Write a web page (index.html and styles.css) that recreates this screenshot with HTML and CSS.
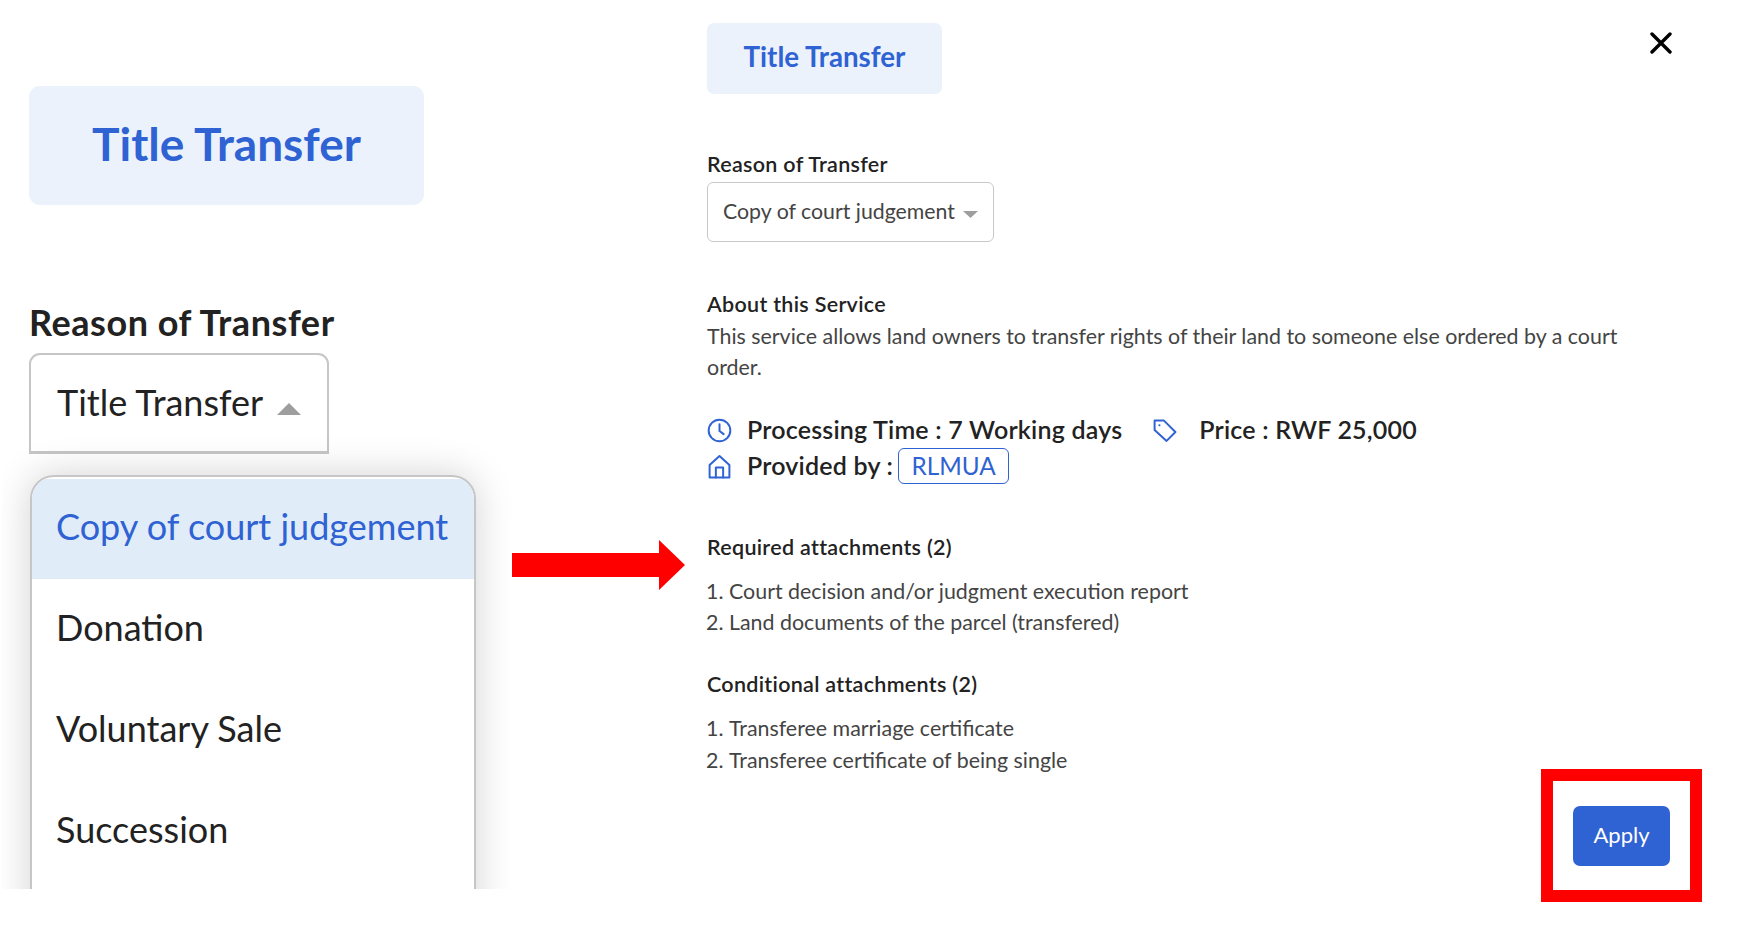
FILE: index.html
```html
<!DOCTYPE html>
<html lang="en">
<head>
<meta charset="utf-8">
<title>Title Transfer</title>
<link rel="stylesheet" href="styles.css">
</head>
<body>
<main class="page">
  <section class="zoomed">
    <div class="zoomed-chip">Title Transfer</div>
    <div class="zoomed-label">Reason of Transfer</div>
    <div class="zoomed-select">
      <span>Title Transfer</span>
      <svg class="zoomed-caret" viewBox="0 0 24 12"><path d="M12 0 24 12H0Z"/></svg>
    </div>
    <ul class="menu">
      <li class="menu-item is-active">Copy of court judgement</li>
      <li class="menu-item">Donation</li>
      <li class="menu-item">Voluntary Sale</li>
      <li class="menu-item">Succession</li>
    </ul>
  </section>

  <svg class="arrow" viewBox="0 0 173 50"><path d="M0 13H147V0L173 25 147 50V37H0Z"/></svg>

  <section class="detail">
    <svg class="close" viewBox="0 0 22 22"><path d="M2 2 20 20M20 2 2 20"/></svg>
    <div class="chip">Title Transfer</div>
    <div class="heading heading-reason">Reason of Transfer</div>
    <div class="select">
      <span>Copy of court judgement</span>
      <svg class="caret" viewBox="0 0 15 7"><path d="M0 0H15L7.5 7Z"/></svg>
    </div>
    <div class="heading heading-about">About this Service</div>
    <p class="copy">This service allows land owners to transfer rights of their land to someone else ordered by a court order.</p>
    <div class="meta">
      <div class="meta-row">
        <svg class="icon" viewBox="0 0 24 24"><circle cx="12" cy="12" r="10.4"/><path d="M12 6V12.5L16 15.5"/></svg>
        <span class="meta-text">Processing Time : 7 Working days</span>
        <svg class="icon icon-tag" viewBox="0 0 24 24"><path d="M2.5 2.5H11.5L22.5 13.5 14 22 2.5 11.5Z"/><path d="M7 7H7.2"/></svg>
        <span class="meta-text">Price : RWF 25,000</span>
      </div>
      <div class="meta-row">
        <svg class="icon" viewBox="0 0 24 24"><path d="M2.5 10.5 12 2 21.5 10.5V22.5H2.5Z"/><path d="M8.5 22.5V13H15.5V22.5"/></svg>
        <span class="meta-text">Provided by :</span>
        <span class="provider">RLMUA</span>
      </div>
    </div>
    <div class="heading heading-required">Required attachments (2)</div>
    <ol class="attachments attachments-required">
      <li>Court decision and/or judgment execution report</li>
      <li>Land documents of the parcel (transfered)</li>
    </ol>
    <div class="heading heading-conditional">Conditional attachments (2)</div>
    <ol class="attachments attachments-conditional">
      <li>Transferee marriage certificate</li>
      <li>Transferee certificate of being single</li>
    </ol>
    <div class="apply-frame"><button class="apply" type="button">Apply</button></div>
  </section>
</main>
</body>
</html>
```
FILE: styles.css
```css
* { box-sizing: border-box; }
html, body { margin: 0; padding: 0; background: #fff; }
body {
  width: 1743px;
  height: 948px;
  overflow: hidden;
  font-family: "Lato", "Open Sans", sans-serif;
  color: #222;
}
.page { display: flex; align-items: flex-start; height: 948px; }

/* left: enlarged picture of the dropdown */
.zoomed {
  width: 509px;
  height: 889px;
  margin-left: 2px;
  padding: 86px 0 0 27px;
  overflow: hidden;
  flex: none;
}
.zoomed-chip {
  width: 395px;
  height: 119px;
  padding-bottom: 4px;
  display: flex;
  align-items: center;
  justify-content: center;
  background: #ecf2fb;
  border-radius: 11px;
  color: #2f62d3;
  font-size: 46px;
  font-weight: 700;
}
.zoomed-label {
  margin-top: 93px;
  height: 48px;
  line-height: 48px;
  font-size: 36px;
  font-weight: 700;
  letter-spacing: .55px;
  color: #222;
}
.zoomed-select {
  width: 300px;
  height: 101px;
  margin-top: 7px;
  padding: 24px 0 0 26px;
  border: 2px solid #c6c6c6;
  border-bottom-width: 3px;
  border-radius: 11px 11px 0 0;
  font-size: 36px;
  line-height: 46px;
  color: #222;
  display: flex;
  align-items: flex-start;
  gap: 14px;
}
.zoomed-caret { width: 24px; height: 12px; margin-top: 24px; fill: #9e9e9e; flex: none; }
.menu {
  list-style: none;
  width: 446px;
  margin: 21px 0 0 1px;
  padding: 2px 0 0;
  height: 500px;
  border: 2px solid #c6c6c6;
  border-radius: 24px;
  box-shadow: 0 0 38px rgba(0, 0, 0, .18);
  overflow: hidden;
  background: #fff;
}
.menu-item {
  height: 101px;
  padding: 0 0 6px 24px;
  display: flex;
  align-items: center;
  font-size: 36px;
  color: #222;
}
.menu-item.is-active { height: 100px; background: #e1ecf9; color: #2f62d3; }

.arrow { width: 173px; height: 50px; margin: 540px 0 0 1px; fill: #f00; flex: none; }

/* right: service detail */
.detail {
  position: relative;
  margin-left: 22px;
  padding-top: 23px;
  width: 1036px;
  flex: none;
  display: flex;
  flex-direction: column;
  align-items: flex-start;
}
.close {
  position: absolute;
  left: 943px;
  top: 32px;
  width: 22px;
  height: 22px;
  fill: none;
  stroke: #000;
  stroke-width: 3.4;
  stroke-linecap: round;
}
.chip {
  width: 235px;
  height: 71px;
  padding-bottom: 5px;
  display: flex;
  align-items: center;
  justify-content: center;
  background: #ecf2fb;
  border-radius: 7px;
  color: #2f62d3;
  font-size: 27.7px;
  font-weight: 700;
}
.heading {
  height: 31px;
  line-height: 29px;
  font-size: 21.5px;
  font-weight: 600;
  letter-spacing: .3px;
  color: #222;
}
.heading-reason { margin-top: 56px; }
.select {
  width: 287px;
  height: 60px;
  margin-top: 1px;
  padding: 0 15px 3px;
  border: 1px solid #c8c8c8;
  border-radius: 6px;
  display: flex;
  align-items: center;
  justify-content: space-between;
  font-size: 21.3px;
  color: #444;
}
.caret { width: 15px; height: 7px; margin-top: 7px; fill: #9e9e9e; flex: none; }
.heading-about { margin-top: 48px; }
.copy {
  margin: 0 0 1px;
  width: 930px;
  font-size: 21.4px;
  line-height: 31px;
  color: #444;
}
.meta { margin-top: 28px; }
.meta-row { display: flex; align-items: center; height: 36px; }
.icon {
  width: 25px;
  height: 25px;
  margin-right: 15px;
  fill: none;
  stroke: #2f62d3;
  stroke-width: 1.9;
  stroke-linecap: round;
  stroke-linejoin: round;
  flex: none;
}
.icon-tag { margin-left: 30px; margin-right: 22px; }
.meta-text { font-size: 25px; font-weight: 600; letter-spacing: .2px; color: #222; padding-bottom: 3px; }
.provider {
  width: 111px;
  height: 36px;
  margin-left: 5px;
  padding-bottom: 2px;
  display: flex;
  align-items: center;
  justify-content: center;
  border: 1px solid #2f62d3;
  border-radius: 6px;
  font-size: 24.3px;
  color: #2f62d3;
}
.heading-required { margin-top: 49px; }
.heading-conditional { margin-top: 31px; }
.attachments {
  margin: 0;
  padding: 0 0 0 22px;
  font-size: 21.4px;
  line-height: 31px;
  color: #444;
}
.attachments-required { margin-top: 12px; margin-bottom: 1px; }
.attachments-conditional { margin-top: 11px; margin-bottom: 1px; line-height: 32px; }
.apply-frame {
  width: 161px;
  height: 133px;
  margin: -8px 0 0 834px;
  border: 12px solid #f00;
  display: flex;
  align-items: center;
  justify-content: center;
}
.apply {
  width: 97px;
  height: 60px;
  padding: 0 0 2px;
  border: 0;
  border-radius: 7px;
  background: #2f62d3;
  color: #fff;
  font-family: "Lato", sans-serif;
  font-size: 22px;
}
```
